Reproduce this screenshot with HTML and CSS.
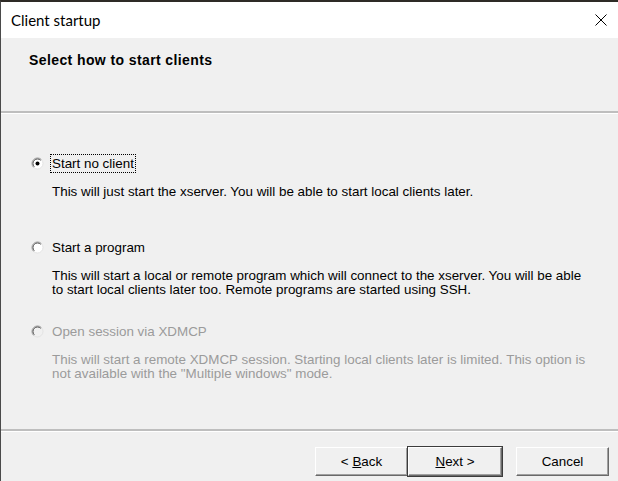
FILE: index.html
```html
<!DOCTYPE html>
<html>
<head>
    <meta charset="UTF-8">
    <title>Client startup</title>
    <link rel="stylesheet" href="styles.css">
</head>
<body>
    <div class="window">
        <div class="titlebar">
            <span class="title">Client startup</span>
            <span class="close">
                <svg width="12" height="12" viewBox="0 0 12 12">
                    <path d="M0.5 0.5 L11.5 11.5 M11.5 0.5 L0.5 11.5" stroke="#000" stroke-width="1" fill="none"/>
                </svg>
            </span>
        </div>
        <div class="header">Select how to start clients</div>
        <div class="sep"></div>
        <div class="content">
            <div class="option">
                <div class="choice">
                    <svg class="radio" width="13" height="13" viewBox="0 0 13 13">
                        <circle cx="6.5" cy="6.5" r="5.5" fill="#fff" stroke="#e3e3e3"/>
                        <path d="M2.6 10.4 A5.5 5.5 0 0 1 10.4 2.6" stroke="#a0a0a0" fill="none"/>
                        <path d="M3.3 9.7 A4.5 4.5 0 0 1 9.7 3.3" stroke="#505050" fill="none"/>
                        <circle cx="6.5" cy="6.5" r="2" fill="#000"/>
                    </svg>
                    <span class="label focused">Start no client</span>
                </div>
                <div class="desc">This will just start the xserver. You will be able to start local clients later.</div>
            </div>
            <div class="option">
                <div class="choice">
                    <svg class="radio" width="13" height="13" viewBox="0 0 13 13">
                        <circle cx="6.5" cy="6.5" r="5.5" fill="#fff" stroke="#e3e3e3"/>
                        <path d="M2.6 10.4 A5.5 5.5 0 0 1 10.4 2.6" stroke="#a0a0a0" fill="none"/>
                        <path d="M3.3 9.7 A4.5 4.5 0 0 1 9.7 3.3" stroke="#505050" fill="none"/>
                    </svg>
                    <span class="label">Start a program</span>
                </div>
                <div class="desc">This will start a local or remote program which will connect to the xserver. You will be able<br>to start local clients later too. Remote programs are started using SSH.</div>
            </div>
            <div class="option disabled">
                <div class="choice">
                    <svg class="radio" width="13" height="13" viewBox="0 0 13 13">
                        <circle cx="6.5" cy="6.5" r="5.5" fill="#f0f0f0" stroke="#e3e3e3"/>
                        <path d="M2.6 10.4 A5.5 5.5 0 0 1 10.4 2.6" stroke="#a0a0a0" fill="none"/>
                        <path d="M3.3 9.7 A4.5 4.5 0 0 1 9.7 3.3" stroke="#505050" fill="none"/>
                    </svg>
                    <span class="label">Open session via XDMCP</span>
                </div>
                <div class="desc">This will start a remote XDMCP session. Starting local clients later is limited. This option is<br>not available with the "Multiple windows" mode.</div>
            </div>
        </div>
        <div class="sep"></div>
        <div class="footer">
            <button class="btn">&lt; <u>B</u>ack</button>
            <button class="btn default"><u>N</u>ext &gt;</button>
            <button class="btn cancel">Cancel</button>
        </div>
    </div>
</body>
</html>
```

FILE: styles.css
```css
body {
    margin: 0;
    font-family: "Liberation Sans", Arial, sans-serif;
    font-size: 13.4px;
    color: #000;
    background: #f0f0f0;
}
.window {
    height: 479px;
    border-top: 2px solid #2e2b26;
    border-left: 1px solid #4a4a4a;
    background: #f0f0f0;
    overflow: hidden;
}
.titlebar {
    height: 36px;
    background: #fff;
    display: flex;
    align-items: center;
    justify-content: space-between;
}
.title {
    font-family: Lato, "Liberation Sans", sans-serif;
    font-size: 15px;
    line-height: 36px;
    padding-left: 10px;
}
.close {
    display: flex;
    width: 12px;
    height: 12px;
    margin-right: 11px;
}
.header {
    height: 73px;
    box-sizing: border-box;
    padding: 15px 0 0 28px;
    font-size: 14px;
    font-weight: bold;
    letter-spacing: 0.4px;
    line-height: 15px;
}
.sep {
    height: 2px;
    background: #bebebe;
    border-bottom: 1px solid #fff;
}
.content {
    height: 315px;
    box-sizing: border-box;
    padding: 40px 0 0 30px;
}
.option {
    margin-bottom: 25px;
}
.choice {
    display: flex;
    align-items: center;
    height: 19px;
}
.radio {
    flex: none;
}
.label {
    margin-left: 6px;
    line-height: 15px;
    padding: 1px;
    border: 1px dotted transparent;
}
.label.focused {
    border-color: #000;
}
.desc {
    margin: 12px 0 0 21px;
    height: 28px;
    line-height: 14px;
    white-space: nowrap;
}
.disabled .label,
.disabled .desc {
    color: #9b9b9b;
}
.footer {
    display: flex;
    padding: 15px 9px 0 0;
    justify-content: flex-end;
}
.btn {
    width: 93px;
    height: 29px;
    box-sizing: border-box;
    font-family: "Liberation Sans", Arial, sans-serif;
    font-size: 13.4px;
    color: #000;
    background: #f0f0f0;
    border-top: 1px solid #fff;
    border-left: 1px solid #fff;
    border-right: 1px solid #696969;
    border-bottom: 1px solid #696969;
    box-shadow: inset -1px -1px 0 #a0a0a0;
    padding: 0;
}
.btn.default {
    width: 94px;
    outline: 1px solid #3c3c3c;
}
.btn.cancel {
    margin-left: 14px;
}
```
